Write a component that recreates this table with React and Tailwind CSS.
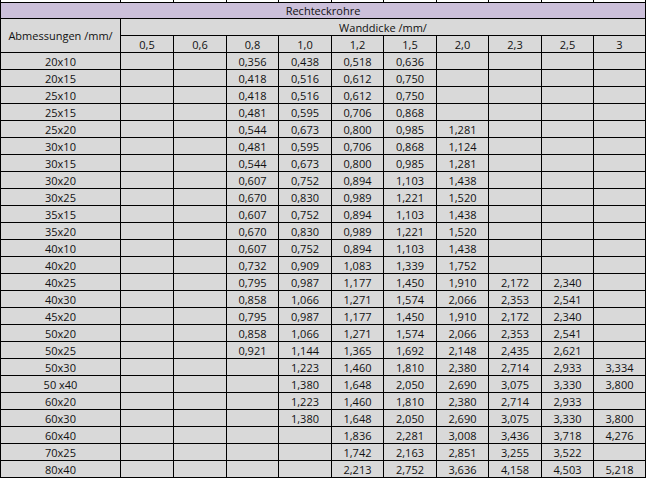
import React from 'react';

const thickness = ['0,5', '0,6', '0,8', '1,0', '1,2', '1,5', '2,0', '2,3', '2,5', '3'];

// each row: label, first filled column index, values
const rows = [
  ['20x10', 2, '0,356 0,438 0,518 0,636'],
  ['20x15', 2, '0,418 0,516 0,612 0,750'],
  ['25x10', 2, '0,418 0,516 0,612 0,750'],
  ['25x15', 2, '0,481 0,595 0,706 0,868'],
  ['25x20', 2, '0,544 0,673 0,800 0,985 1,281'],
  ['30x10', 2, '0,481 0,595 0,706 0,868 1,124'],
  ['30x15', 2, '0,544 0,673 0,800 0,985 1,281'],
  ['30x20', 2, '0,607 0,752 0,894 1,103 1,438'],
  ['30x25', 2, '0,670 0,830 0,989 1,221 1,520'],
  ['35x15', 2, '0,607 0,752 0,894 1,103 1,438'],
  ['35x20', 2, '0,670 0,830 0,989 1,221 1,520'],
  ['40x10', 2, '0,607 0,752 0,894 1,103 1,438'],
  ['40x20', 2, '0,732 0,909 1,083 1,339 1,752'],
  ['40x25', 2, '0,795 0,987 1,177 1,450 1,910 2,172 2,340'],
  ['40x30', 2, '0,858 1,066 1,271 1,574 2,066 2,353 2,541'],
  ['45x20', 2, '0,795 0,987 1,177 1,450 1,910 2,172 2,340'],
  ['50x20', 2, '0,858 1,066 1,271 1,574 2,066 2,353 2,541'],
  ['50x25', 2, '0,921 1,144 1,365 1,692 2,148 2,435 2,621'],
  ['50x30', 3, '1,223 1,460 1,810 2,380 2,714 2,933 3,334'],
  ['50 x40', 3, '1,380 1,648 2,050 2,690 3,075 3,330 3,800'],
  ['60x20', 3, '1,223 1,460 1,810 2,380 2,714 2,933'],
  ['60x30', 3, '1,380 1,648 2,050 2,690 3,075 3,330 3,800'],
  ['60x40', 4, '1,836 2,281 3,008 3,436 3,718 4,276'],
  ['70x25', 4, '1,742 2,163 2,851 3,255 3,522'],
  ['80x40', 4, '2,213 2,752 3,636 4,158 4,503 5,218'],
];

const cols = 'grid grid-cols-[120px_53px_53px_52px_53px_52px_53px_52px_53px_52px_52px]';
const cell = 'border-r border-b border-black flex items-center justify-center';

export default function App() {
  return (
    <div className="w-[648px] h-[478px] overflow-hidden bg-white text-[#111] text-[11px] leading-none" style={{ fontFamily: '"Open Sans", "Noto Sans", sans-serif' }}>
      <div className={`${cols} w-[646px] border-l border-black`}>
        {/* cut-off row above */}
        {Array.from({ length: 11 }).map((_, i) => (
          <div key={'t' + i} className="h-[3px] border-r border-b border-black bg-white" />
        ))}

        <div className={`${cell} col-span-11 h-[16px] bg-[#ccc0da]`}>Rechteckrohre</div>

        <div className={`${cell} row-span-2 bg-[#d9d9d9] pb-[1px]`}>Abmessungen /mm/</div>
        <div className={`${cell} col-span-10 h-[17px] bg-[#d9d9d9]`}>Wanddicke /mm/</div>
        {thickness.map((t) => (
          <div key={t} className={`${cell} h-[17px] bg-[#d9d9d9]`}>{t}</div>
        ))}

        {rows.map(([label, start, vals]) => {
          const v = vals.split(' ');
          return (
            <React.Fragment key={label}>
              <div className={`${cell} h-[17px] bg-[#d9d9d9]`}>{label}</div>
              {thickness.map((t, i) => (
                <div key={t} className={`${cell} h-[17px] bg-[#d9d9d9]`}>
                  {i >= start && i - start < v.length ? v[i - start] : ''}
                </div>
              ))}
            </React.Fragment>
          );
        })}
      </div>
    </div>
  );
}
